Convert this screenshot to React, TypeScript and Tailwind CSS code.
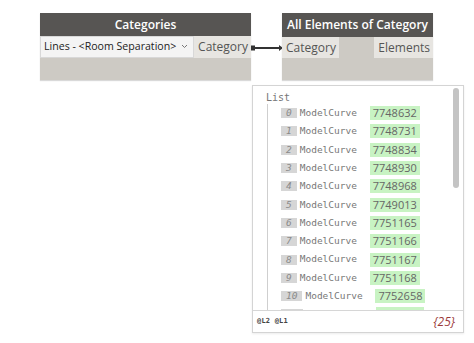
import React from "react";

const rows = [
  ["0", "7748632"],
  ["1", "7748731"],
  ["2", "7748834"],
  ["3", "7748930"],
  ["4", "7748968"],
  ["5", "7749013"],
  ["6", "7751165"],
  ["7", "7751166"],
  ["8", "7751167"],
  ["9", "7751168"],
  ["10", "7752658"],
];

const sans = { fontFamily: '"Open Sans", "Noto Sans", sans-serif' };
const mono = { fontFamily: '"DejaVu Sans Mono", "Liberation Mono", monospace' };

export default function App() {
  return (
    <div className="relative w-[474px] h-[343px] bg-white overflow-hidden" style={sans}>
      {/* Categories node */}
      <div className="absolute left-[40px] top-[13px] w-[211px] h-[67px] flex flex-col bg-[#cdcac4] shadow-[0_1px_1px_rgba(0,0,0,0.15)]">
        <div className="h-[23px] bg-[#575553] flex items-center justify-center text-white text-[12px] font-semibold">
          Categories
        </div>
        <div className="h-[22px] flex">
          <div className="w-[154px] bg-[#f4f4f4] border border-[#d8d8d8] flex items-center pl-[3px] pr-[5px] text-[#222] text-[10.6px]">
            <span className="flex-1 whitespace-nowrap">Lines - &lt;Room Separation&gt;</span>
            <svg width="7" height="5" viewBox="0 0 7 5" className="mb-[2px]">
              <path d="M1 1 L3.5 3.5 L6 1" stroke="#777" strokeWidth="1" fill="none" />
            </svg>
          </div>
          <div className="flex-1 bg-[#e7e5e1] flex items-center justify-end pr-[3px] text-[#555] text-[12px]">
            Category
          </div>
        </div>
      </div>

      {/* wire */}
      <svg className="absolute left-[250px] top-[42px]" width="34" height="12" viewBox="0 0 34 12">
        <rect x="1" y="3.5" width="4" height="5" fill="#333" />
        <path d="M3 6 L30 6" stroke="#333" strokeWidth="2" />
        <path d="M29 3 L33 6 L29 9 Z" fill="#333" />
      </svg>

      {/* All Elements of Category node */}
      <div className="absolute left-[282px] top-[13px] w-[151px] h-[67px] flex flex-col bg-[#cdcac4] shadow-[0_1px_1px_rgba(0,0,0,0.15)]">
        <div className="h-[24px] bg-[#575553] flex items-center justify-center text-white text-[12px] font-semibold whitespace-nowrap">
          All Elements of Category
        </div>
        <div className="h-[21px] flex justify-between">
          <div className="w-[57px] bg-[#e7e5e1] flex items-center pl-[4px] text-[#555] text-[12px]">Category</div>
          <div className="w-[59px] bg-[#e7e5e1] flex items-center justify-end pr-[3px] text-[#555] text-[12px]">Elements</div>
        </div>
      </div>

      {/* Watch panel */}
      <div className="absolute left-[252px] top-[85px] w-[212px] h-[248px] border border-[#d4d4d4] bg-white flex flex-col shadow-[0_1px_2px_rgba(0,0,0,0.08)]">
        <div className="relative h-[224px] overflow-hidden">
          <div className="absolute left-[200px] top-[2px] w-[6px] h-[100px] rounded-[3px] bg-[#c4c4c4]" />
          <div className="pl-[13px] pt-[5px] flex flex-col">
            <div className="h-[13px] leading-[13px] text-[10px] text-[#777]" style={mono}>List</div>
            <div className="flex border-l border-[#cfcfcf] ml-[1px]">
              <div className="flex flex-col pl-[13px]">
                {rows.map(([i, v]) => (
                  <div key={i} className="h-[18.3px] flex items-center shrink-0">
                    <div
                      className="h-[10px] leading-[10px] px-[5px] bg-[#d6d6d6] text-[9.5px] italic text-[#8a8a8a] flex items-center"
                      style={mono}
                    >
                      {i}
                    </div>
                    <div className="ml-[3px] w-[70px] text-[9.5px] text-[#777]" style={mono}>
                      ModelCurve
                    </div>
                    <div className="h-[14px] px-[3px] bg-[#c8f3c3] text-[#666] text-[11px] leading-[14px] flex items-center">
                      {v}
                    </div>
                  </div>
                ))}
                <div className="h-[18.3px] flex items-center shrink-0">
                  <div className="h-[10px] w-[22px] bg-[#d6d6d6]" />
                  <div className="ml-[73px] h-[14px] w-[48px] bg-[#c8f3c3]" />
                </div>
              </div>
            </div>
          </div>
        </div>
        <div className="flex-1 border-t border-[#d6d6d6] flex items-center justify-between pl-[4px] pr-[8px]">
          <span className="text-[7px] font-bold text-[#444] tracking-[0.2px]" style={mono}>@L2 @L1</span>
          <span className="text-[12px] italic text-[#9b3a3a]">{"{25}"}</span>
        </div>
      </div>
    </div>
  );
}
